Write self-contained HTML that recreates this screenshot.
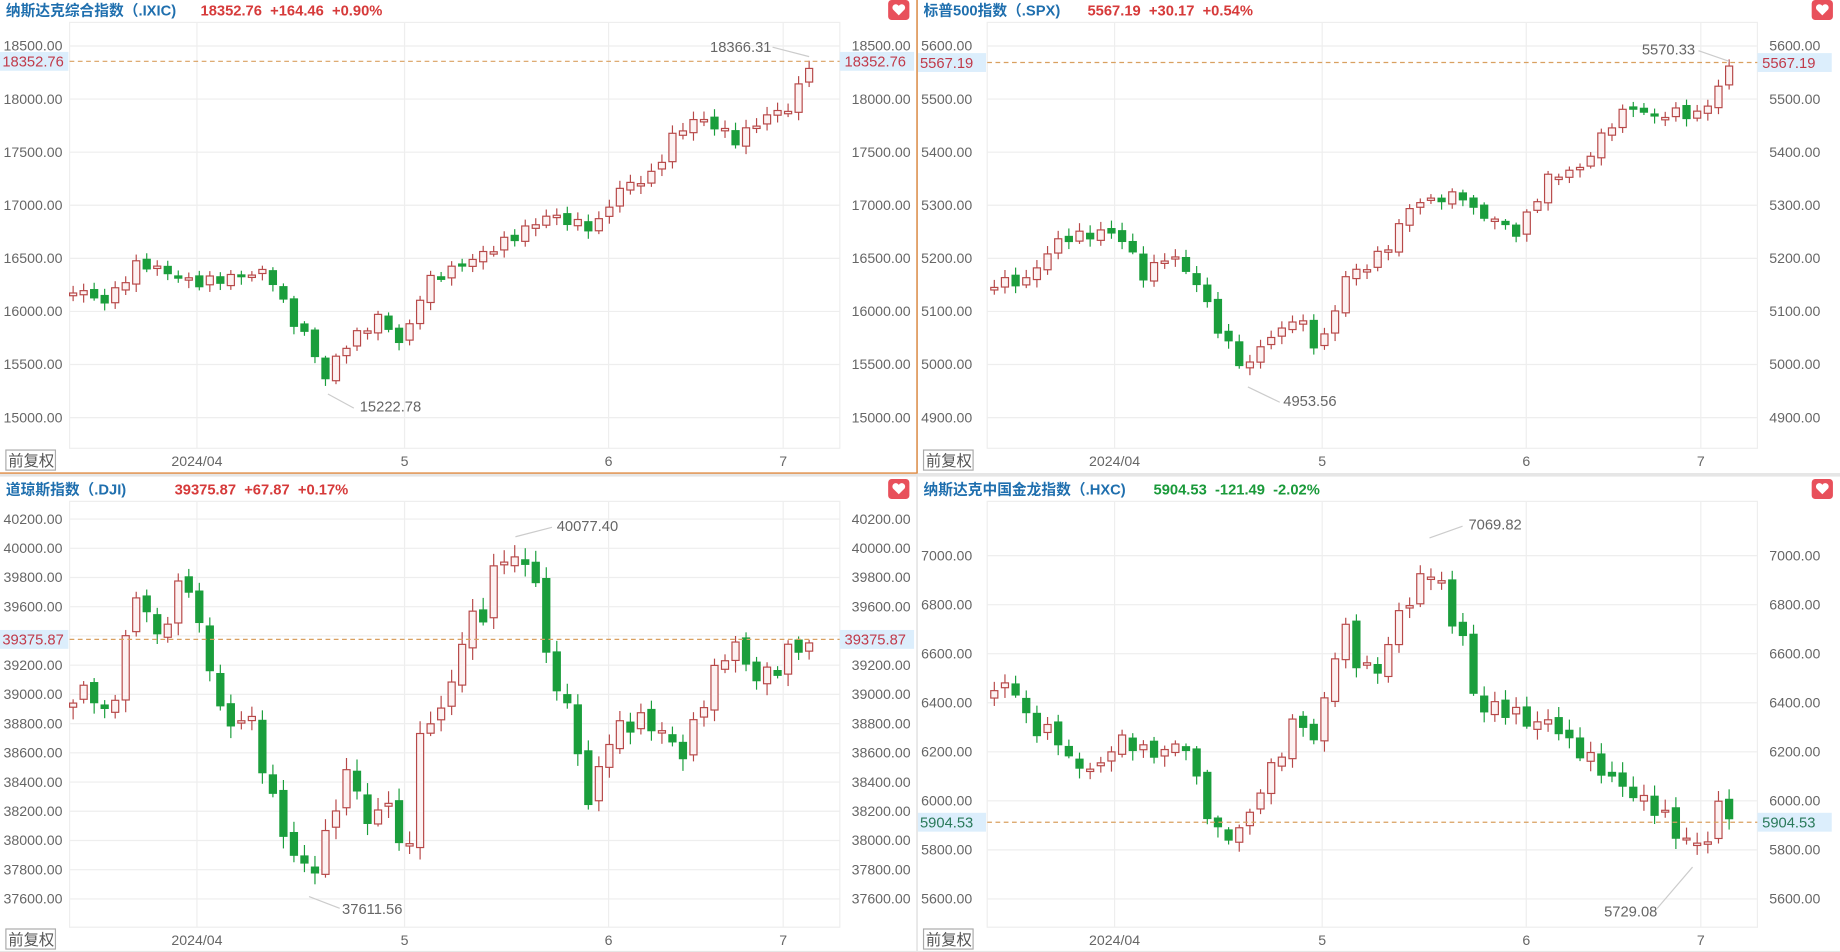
<!DOCTYPE html>
<html><head><meta charset="utf-8">
<style>
html,body{margin:0;padding:0;background:#fff;overflow:hidden;}
svg{display:block;font-family:"Liberation Sans","Noto Sans CJK SC",sans-serif;}
text{white-space:pre;}
</style></head>
<body>
<svg id="s" width="1840" height="952" viewBox="0 0 1560 807" preserveAspectRatio="none" xmlns="http://www.w3.org/2000/svg">
<rect x="0" y="0" width="1560" height="807" fill="#fff"/>
</svg>
<script>
var NS="http://www.w3.org/2000/svg",S=document.getElementById('s');
function el(t,a,txt){var e=document.createElementNS(NS,t);for(var k in a)e.setAttribute(k,a[k]);if(txt!=null)e.textContent=txt;S.appendChild(e);return e;}
function panel(P){
 var L=P.x0,R=P.x1,T=P.y0;
 var pl=L+59,pr=L+712,pt=T+19,pb=T+380;
 el('text',{x:L+5,y:T+13,'font-size':12.5,'font-weight':'bold',fill:'#1f6fae'},P.name);
 el('text',{x:L+P.vx,y:T+13,'font-size':12.5,'font-weight':'bold',fill:P.vc,'xml:space':'preserve'},P.val);
 el('rect',{x:R-24,y:T+0,width:18,height:17,rx:3,fill:'#e8505b'});
 el('path',{d:'M'+(R-15)+' '+(T+13)+' l-5 -5 a2.6 2.6 0 0 1 5 -3 a2.6 2.6 0 0 1 5 3 z',fill:'#fff'});
 el('rect',{x:pl,y:pt,width:pr-pl,height:pb-pt,fill:'none',stroke:'#eeeeee'});
 P.ticks.forEach(function(t){
  el('line',{x1:pl,x2:pr,y1:t[1],y2:t[1],stroke:'#eeeeee'});
  el('text',{x:L+3,y:t[1]+4,'font-size':12,fill:'#666'},t[0]);
  el('text',{x:pr+10,y:t[1]+4,'font-size':12,fill:'#666'},t[0]);
 });
 [[L+167,'2024/04'],[L+343,'5'],[L+516,'6'],[L+664,'7']].forEach(function(d){
  el('line',{x1:d[0],x2:d[0],y1:pt,y2:pb,stroke:'#eeeeee'});
  el('text',{x:d[0],y:pb+15,'font-size':12,fill:'#666','text-anchor':'middle'},d[1]);
 });
 el('rect',{x:L+5,y:pb+1.5,width:42,height:17,fill:'#fff',stroke:'#aaa'});
 el('text',{x:L+7,y:pb+15,'font-size':13,fill:'#555'},'前复权');
 var W=P.wp,n=P.n,x0=W[0][0],x1=W[W.length-1][0],sp=(x1-x0)/(n-1);
 function iy(x){for(var i=1;i<W.length;i++){if(x<=W[i][0]){var a=W[i-1],b=W[i];return a[1]+(b[1]-a[1])*(x-a[0])/(b[0]-a[0]);}}return W[W.length-1][1];}
 var prev=iy(x0)+4;
 for(var i=0;i<n;i++){
  var x=x0+i*sp,c=iy(x)+(i<n-1?Math.sin(i*2.7+P.seed)*P.nz:0);
  var o=prev+Math.sin(i*1.3+P.seed)*P.nz*0.5;
  if(Math.abs(o-c)<1.5)o=c+2;
  var up=c<o,top=Math.min(o,c),bot=Math.max(o,c);
  var hi=top-2-Math.abs(Math.sin(i*3.1+P.seed))*P.nz*1.2,lo=bot+2+Math.abs(Math.cos(i*1.9+P.seed))*P.nz*1.2;
  var col=up?'#b74848':'#1a9e3c';
  el('line',{x1:x,x2:x,y1:hi,y2:lo,stroke:col,'stroke-width':1});
  el('rect',{x:x-3,y:top,width:6,height:bot-top,fill:up?'#fdf2f2':'#1a9e3c',stroke:col,'stroke-width':1});
  prev=c;
 }
 var py=P.py;
 el('line',{x1:pl,x2:pr,y1:py,y2:py,stroke:'#d9a060','stroke-dasharray':'4,3'});
 el('rect',{x:L,y:py-8,width:58,height:16,fill:'#dceefc'});
 el('rect',{x:pr,y:py-8,width:63,height:16,fill:'#dceefc'});
 el('text',{x:L+2,y:py+4.5,'font-size':12.5,fill:P.pc},P.pv);
 el('text',{x:pr+4,y:py+4.5,'font-size':12.5,fill:P.pc},P.pv);
 P.ann.forEach(function(a){
  el('line',{x1:a[2],y1:a[3],x2:a[4],y2:a[5],stroke:'#ccc'});
  el('text',{x:a[0],y:a[1],'font-size':12.5,fill:'#666'},a[6]);
 });
}
function ticks(vals,y0,step){return vals.map(function(v,i){return [v,y0+i*step];});}
panel({x0:0,x1:777,y0:0,name:'纳斯达克综合指数（.IXIC)',vx:170,val:'18352.76  +164.46  +0.90%',vc:'#d63a3a',
 ticks:ticks(['18500.00','18000.00','17500.00','17000.00','16500.00','16000.00','15500.00','15000.00'],39,45),
 n:71,seed:1,nz:4,py:52,pc:'#c03a4a',pv:'18352.76',
 wp:[[62,245],[90,256],[118,222],[165,240],[228,230],[245,268],[262,288],[275,322],[290,295],[322,268],[340,292],[348,275],[360,240],[410,215],[440,198],[465,182],[490,190],[505,193],[525,160],[555,148],[568,118],[590,100],[610,108],[622,120],[650,98],[668,92],[686,58]],
 ann:[[602,44,655,40,686,48,'18366.31'],[305,349,300,346,278,334,'15222.78']]});
panel({x0:778,x1:1560,y0:0,name:'标普500指数（.SPX)',vx:144,val:'5567.19  +30.17  +0.54%',vc:'#d63a3a',
 ticks:ticks(['5600.00','5500.00','5400.00','5300.00','5200.00','5100.00','5000.00','4900.00'],39,45),
 n:70,seed:2,nz:4,py:53,pc:'#c03a4a',pv:'5567.19',
 wp:[[843,240],[870,238],[890,212],[900,202],[930,198],[945,196],[960,215],[970,235],[990,215],[1005,228],[1020,248],[1030,275],[1045,298],[1057,315],[1070,290],[1085,282],[1100,265],[1112,292],[1125,285],[1140,235],[1160,225],[1180,205],[1195,175],[1210,170],[1240,165],[1250,180],[1270,187],[1285,198],[1300,175],[1310,152],[1330,145],[1340,143],[1355,120],[1370,100],[1385,90],[1400,100],[1420,95],[1440,98],[1455,78],[1466,56]],
 ann:[[1392,46,1440,43,1466,52,'5570.33'],[1088,344,1085,341,1058,328,'4953.56']]});
panel({x0:0,x1:777,y0:406,name:'道琼斯指数（.DJI)',vx:148,val:'39375.87  +67.87  +0.17%',vc:'#d63a3a',
 ticks:ticks(['40200.00','40000.00','39800.00','39600.00','39400.00','39200.00','39000.00','38800.00','38600.00','38400.00','38200.00','38000.00','37800.00','37600.00'],440,24.77),
 n:71,seed:3,nz:7,py:542,pc:'#c03a4a',pv:'39375.87',
 wp:[[62,595],[75,580],[90,610],[100,580],[110,525],[118,495],[125,520],[135,545],[150,500],[160,495],[165,515],[175,560],[185,580],[190,630],[200,610],[210,600],[220,640],[235,690],[245,720],[255,732],[265,740],[280,700],[290,660],[300,655],[310,700],[320,690],[330,675],[340,730],[350,700],[355,630],[365,610],[380,595],[390,545],[400,525],[410,520],[420,480],[430,470],[440,475],[455,490],[465,575],[475,580],[490,635],[500,690],[510,640],[520,620],[530,615],[545,610],[560,620],[570,630],[580,640],[590,610],[600,585],[610,560],[625,545],[635,570],[645,575],[660,565],[670,550],[686,545]],
 ann:[[472,450,468,447,437,455,'40077.40'],[290,775,288,770,262,760,'37611.56']]});
panel({x0:778,x1:1560,y0:406,name:'纳斯达克中国金龙指数（.HXC)',vx:200,val:'5904.53  -121.49  -2.02%',vc:'#1a9a3a',
 ticks:ticks(['7000.00','6800.00','6600.00','6400.00','6200.00','6000.00','5800.00','5600.00'],471,41.57),
 n:70,seed:4,nz:6,py:697,pc:'#2a7a5a',pv:'5904.53',
 wp:[[843,590],[855,572],[865,600],[880,620],[895,620],[905,645],[920,650],[930,655],[945,628],[960,630],[975,640],[990,635],[1005,630],[1015,665],[1030,705],[1045,710],[1060,690],[1070,665],[1085,640],[1100,605],[1115,630],[1130,560],[1140,532],[1150,560],[1165,572],[1175,555],[1185,520],[1195,510],[1210,480],[1220,490],[1230,525],[1240,538],[1245,580],[1255,600],[1270,600],[1285,605],[1300,615],[1315,610],[1330,630],[1345,640],[1360,655],[1380,670],[1395,680],[1410,690],[1425,712],[1440,715],[1450,710],[1458,680],[1466,694]],
 ann:[[1245,449,1240,446,1212,456,'7069.82'],[1360,777,1405,770,1435,735,'5729.08']]});
el('line',{x1:0,x2:1560,y1:402.5,y2:402.5,stroke:'#e6e6e6','stroke-width':3});
el('line',{x1:777.5,x2:777.5,y1:0,y2:807,stroke:'#e6e6e6','stroke-width':1.5});
el('line',{x1:777.5,x2:777.5,y1:0,y2:401,stroke:'#e08a40','stroke-width':1.2});
el('line',{x1:0,x2:778,y1:401,y2:401,stroke:'#e08a40','stroke-width':1.2});
el('line',{x1:0,x2:1560,y1:806.5,y2:806.5,stroke:'#e6e6e6','stroke-width':1});
</script>
</body></html>
